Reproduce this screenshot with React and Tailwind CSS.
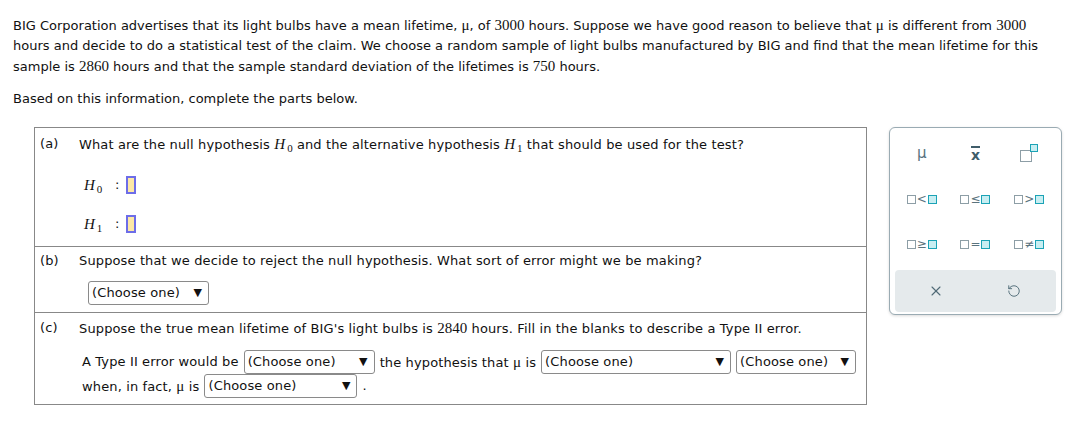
import React from 'react'
import { X, RotateCcw } from 'lucide-react'

const num = 'font-["Liberation_Serif",serif] text-[15px] tracking-normal'

function Mu() {
  return <span className='font-["Liberation_Serif",serif] text-[15px]'>μ</span>
}

function Hyp({ sub }) {
  return (
    <span className='font-["Liberation_Serif",serif] italic text-[15px] tracking-normal'>
      H<sub className="not-italic text-[11px] relative top-[3px] ml-[2px]">{sub}</sub>
    </span>
  )
}

function Blank() {
  return <span className="inline-block w-[10px] h-[18px] border-2 border-[#6d6de8] bg-[#fde8a6] align-middle" />
}

function Select({ w }) {
  return (
    <span
      className="inline-flex items-center justify-between h-[24px] border border-[#8a8a8a] rounded-[3px] bg-white pl-[3px] pr-[6px] align-middle"
      style={{ width: w }}
    >
      <span>(Choose one)</span>
      <span className="text-[11px]">▼</span>
    </span>
  )
}

function Box({ fill }) {
  return fill ? (
    <span className="inline-block w-[9px] h-[9px] border-[1.5px] border-[#1ba3b6] bg-[#c8eef2]" />
  ) : (
    <span className="inline-block w-[9px] h-[9px] border-[1.5px] border-[#8d9ea6]" />
  )
}

function Rel({ sym }) {
  return (
    <span className="flex items-center gap-[1px] text-[#5a737e] text-[12px] leading-none">
      <Box />
      <span className="w-[10px] text-center">{sym}</span>
      <Box fill />
    </span>
  )
}

export default function App() {
  return (
    <div className='w-[1090px] h-[427px] bg-white text-[#111] font-["DejaVu_Sans",Verdana,sans-serif] text-[13px] leading-[20px] tracking-[0.13px]'>
      <p className="pl-[13px] pt-[15px] whitespace-nowrap tracking-[0px]">
        BIG Corporation advertises that its light bulbs have a mean lifetime, <Mu />, of <span className={num}>3000</span> hours. Suppose we have good reason to believe that <Mu /> is different from <span className={num}>3000</span>
        <br />
        hours and decide to do a statistical test of the claim. We choose a random sample of light bulbs manufactured by BIG and find that the mean lifetime for this
        <br />
        sample is <span className={num}>2860</span> hours and that the sample standard deviation of the lifetimes is <span className={num}>750</span> hours.
      </p>
      <p className="pl-[13px] mt-[12px] tracking-[0px]">Based on this information, complete the parts below.</p>

      <div className="flex items-start mt-[18px]">
        <div className="ml-[34px] w-[833px] border border-[#888]">
          <div className="h-[119px] border-b border-[#888] pt-[6px] flex">
            <div className="w-[44px] pl-[5px] shrink-0">(a)</div>
            <div>
              <div>
                What are the null hypothesis <Hyp sub="0" /> and the alternative hypothesis <Hyp sub="1" /> that should be used for the test?
              </div>
              <div className="mt-[20px] ml-[5px] h-[20px] flex items-center gap-[6px]">
                <span className="w-[25px]"><Hyp sub="0" /></span>
                <span>:</span>
                <Blank />
              </div>
              <div className="mt-[19px] ml-[5px] h-[20px] flex items-center gap-[6px]">
                <span className="w-[25px]"><Hyp sub="1" /></span>
                <span>:</span>
                <Blank />
              </div>
            </div>
          </div>

          <div className="h-[66px] border-b border-[#888] pt-[4px] flex">
            <div className="w-[44px] pl-[5px] shrink-0">(b)</div>
            <div>
              <div>Suppose that we decide to reject the null hypothesis. What sort of error might we be making?</div>
              <div className="mt-[10px] ml-[9px]">
                <Select w={121} />
              </div>
            </div>
          </div>

          <div className="h-[91px] pt-[5px] flex">
            <div className="w-[44px] pl-[5px] shrink-0">(c)</div>
            <div>
              <div>
                Suppose the true mean lifetime of BIG's light bulbs is <span className={num}>2840</span> hours. Fill in the blanks to describe a Type II error.
              </div>
              <div className="mt-[11px] ml-[3px] h-[24px] flex items-center gap-[5px]">
                <span>A Type II error would be</span>
                <Select w={131} />
                <span>the hypothesis that <Mu /> is</span>
                <Select w={190} />
                <Select w={120} />
              </div>
              <div className="ml-[3px] h-[24px] flex items-center gap-[5px]">
                <span>when, in fact, <Mu /> is</span>
                <Select w={153} />
                <span>.</span>
              </div>
            </div>
          </div>
        </div>

        <div className="ml-[22px] w-[173px] border border-[#9aabb3] rounded-[6px] shadow-[0_1px_3px_rgba(0,0,0,0.15)] bg-white flex flex-col px-[5px] pt-[15px] pb-[2px]">
          <div className="grid grid-cols-3 h-[20px]">
            <div className="flex justify-center items-center text-[#587380] text-[15px]">μ</div>
            <div className="flex justify-center items-center">
              <span className="text-[#3f5d6a] font-bold text-[14px] leading-[13px] border-t-2 border-[#3f5d6a] pt-[1px] mt-[2px]">x</span>
            </div>
            <div className="flex justify-center items-center">
              <span className="relative w-[18px] h-[18px]">
                <span className="absolute left-0 bottom-0 w-[12px] h-[12px] border-[1.5px] border-[#8d9ea6]" />
                <span className="absolute right-0 top-0 w-[8px] h-[8px] border-[1.5px] border-[#1ba3b6] bg-[#c8eef2]" />
              </span>
            </div>
          </div>
          <div className="grid grid-cols-3 h-[20px] mt-[26px]">
            <div className="flex justify-center items-center"><Rel sym="<" /></div>
            <div className="flex justify-center items-center"><Rel sym="≤" /></div>
            <div className="flex justify-center items-center"><Rel sym=">" /></div>
          </div>
          <div className="grid grid-cols-3 h-[20px] mt-[25px]">
            <div className="flex justify-center items-center"><Rel sym="≥" /></div>
            <div className="flex justify-center items-center"><Rel sym="=" /></div>
            <div className="flex justify-center items-center"><Rel sym="≠" /></div>
          </div>
          <div className="h-[42px] mt-[16px] bg-[#e5eaec] rounded-[4px] grid grid-cols-2 items-center">
            <div className="flex justify-center pl-[2px]"><X size={16} strokeWidth={1.6} color="#4f6a76" /></div>
            <div className="flex justify-center pr-[4px]"><RotateCcw size={14} strokeWidth={1.6} color="#4f6a76" /></div>
          </div>
        </div>
      </div>
    </div>
  )
}
